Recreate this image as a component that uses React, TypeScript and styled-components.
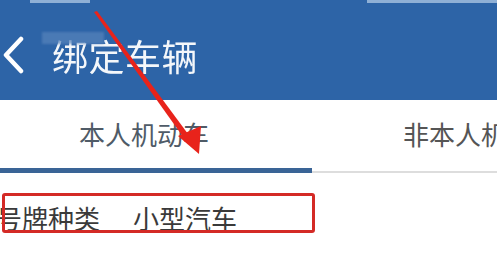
import React from 'react';
import styled, { createGlobalStyle } from 'styled-components';

const GlobalStyle = createGlobalStyle`
    html, body {
        margin: 0;
        padding: 0;
        background: #ffffff;
    }
    body {
        font-family: "Noto Sans CJK SC", "Noto Sans", sans-serif;
        overflow: hidden;
    }
`;

const App: React.FC = () => {
    return (
        <Page>
            <GlobalStyle />
            <Header>
                <StatusBar>
                    <Blur $left={30} $width={60} />
                    <Blur $left={367} $width={130} />
                </StatusBar>
                <NavBar>
                    <BackButton>
                        <svg width="22" height="38" viewBox="0 0 22 38">
                            <polyline points="19,3 4,19 19,35" fill="none" stroke="#ffffff" strokeWidth="4.5" strokeLinecap="round" strokeLinejoin="round" />
                        </svg>
                    </BackButton>
                    <Title>
                        <TitleBlur />
                        绑定车辆
                    </Title>
                </NavBar>
            </Header>
            <Tabs>
                <Tab $active $pad={79}>本人机动车</Tab>
                <Tab $pad={91}>非本人机动车</Tab>
            </Tabs>
            <Row>
                <Label>号牌种类</Label>
                <Value>小型汽车</Value>
            </Row>
            <Highlight />
            <Arrow width="497" height="255" viewBox="0 0 497 255">
                <polygon points="94,12 97,11 191,138 186,141" fill="#e8231b" />
                <polygon points="178,136 201,126 199,154" fill="#e8231b" />
            </Arrow>
        </Page>
    );
};

const Page = styled.div`
    position: relative;
    width: 497px;
    height: 255px;
    overflow: hidden;
    background: #ffffff;
`;

const Header = styled.div`
    background: #2d64a7;
    height: 100px;
    display: flex;
    flex-direction: column;
`;

const StatusBar = styled.div`
    position: relative;
    height: 30px;
`;

const Blur = styled.div<{ $left: number; $width: number }>`
    position: absolute;
    top: 0;
    left: ${p => p.$left}px;
    width: ${p => p.$width}px;
    height: 3px;
    background: #8fb0d6;
    filter: blur(0.6px);
`;

const NavBar = styled.div`
    display: flex;
    align-items: center;
    height: 50px;
    padding-left: 2px;
    gap: 28px;
`;

const BackButton = styled.div`
    display: flex;
    align-items: center;
    width: 22px;
    height: 38px;
`;

const Title = styled.div`
    position: relative;
    color: #ffffff;
    font-size: 36px;
    line-height: 1;
    letter-spacing: 0.5px;
    opacity: 0.95;
`;

const TitleBlur = styled.div`
    position: absolute;
    top: -5px;
    left: -10px;
    width: 62px;
    height: 12px;
    background: #5a86bd;
    opacity: 0.7;
    filter: blur(1px);
`;

const Tabs = styled.div`
    display: flex;
    height: 73px;
    box-shadow: inset 0 -2px 0 #dddddd;
`;

const Tab = styled.div<{ $active?: boolean; $pad: number }>`
    flex: 0 0 312px;
    display: flex;
    align-items: center;
    padding-left: ${p => p.$pad}px;
    padding-bottom: 2px;
    box-sizing: border-box;
    font-size: 26px;
    color: ${p => (p.$active ? '#4f5b67' : '#555555')};
    white-space: nowrap;
    border-bottom: 5px solid ${p => (p.$active ? '#3a6496' : 'transparent')};
`;

const Row = styled.div`
    display: flex;
    align-items: center;
    height: 40px;
    margin-top: 24px;
    margin-left: -4px;
    gap: 33px;
    font-size: 26px;
    color: #3a3a3a;
`;

const Label = styled.span``;

const Value = styled.span``;

const Highlight = styled.div`
    position: absolute;
    left: 2px;
    top: 193px;
    width: 313px;
    height: 40px;
    box-sizing: border-box;
    border: 3px solid #d42a26;
    border-radius: 3px;
`;

const Arrow = styled.svg`
    position: absolute;
    left: 0;
    top: 0;
    pointer-events: none;
`;

export default App;
